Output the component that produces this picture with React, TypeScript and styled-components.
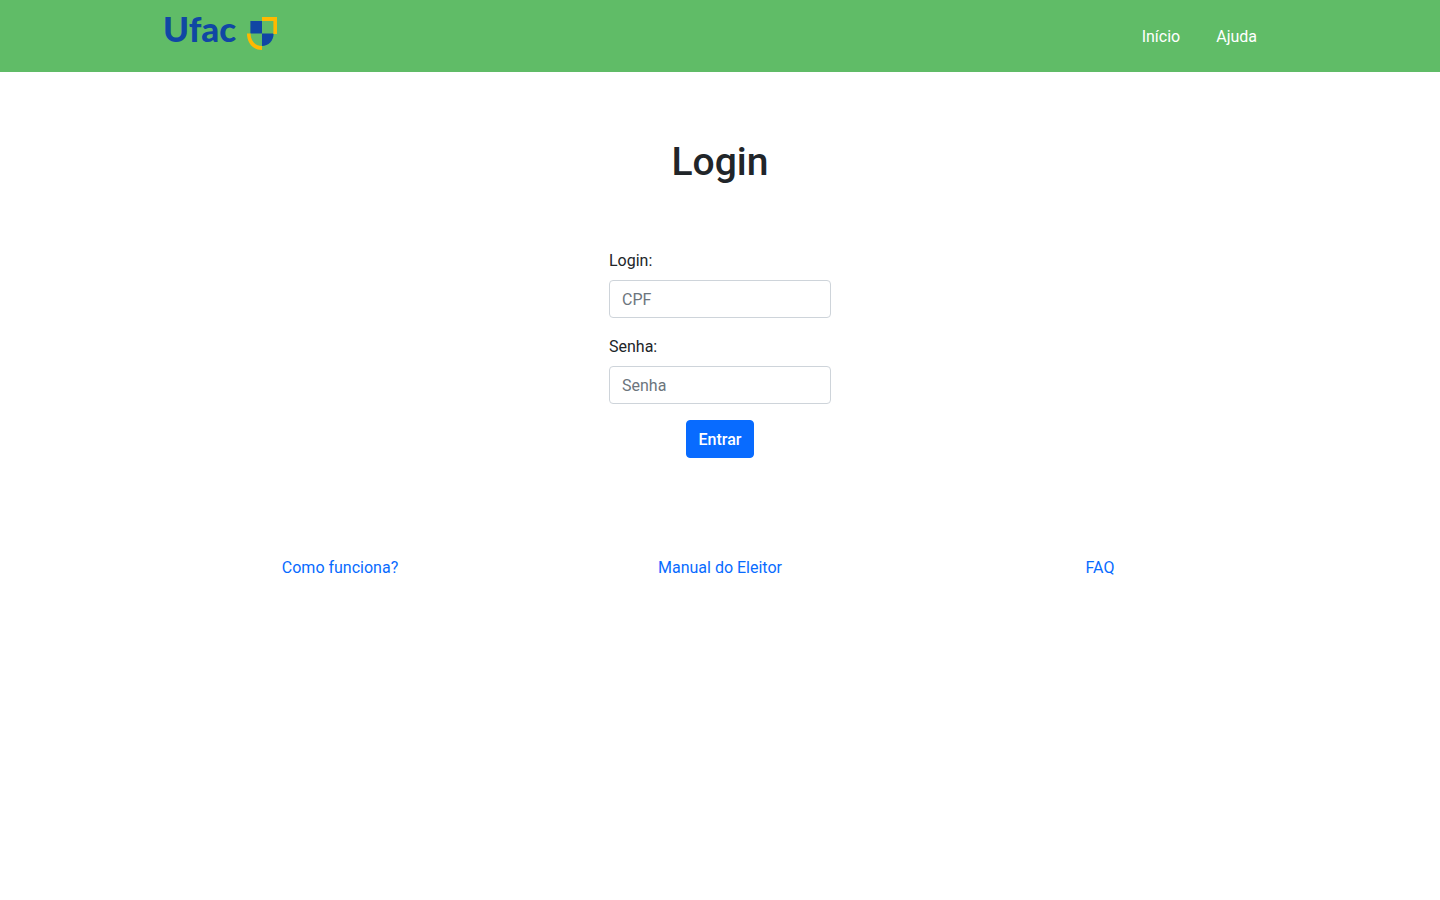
import React from "react";
import styled, { createGlobalStyle } from "styled-components";

const GlobalStyle = createGlobalStyle`
  *, *::before, *::after { box-sizing: border-box; }
  body {
    margin: 0;
    background: #fff;
    color: #212529;
    font-family: Roboto, "Liberation Sans", sans-serif;
    font-size: 16px;
    line-height: 24px;
  }
`;

const Container = styled.div`
  width: 100%;
  max-width: 1140px;
  margin: 0 auto;
`;

const Header = styled.header`
  background: #60bc67;
`;

const HeaderInner = styled(Container)`
  display: flex;
  align-items: flex-start;
  justify-content: space-between;
  min-height: 72px;
  padding: 8px 15px 8px 13px;
`;

const Brand = styled.a`
  display: flex;
  align-items: flex-start;
  gap: 10px;
  padding-top: 6px;
  color: #1047a4;
  text-decoration: none;
`;

const BrandName = styled.span`
  font-family: Lato, sans-serif;
  font-size: 35px;
  font-weight: 900;
  line-height: 28px;
`;

const Shield = styled.svg`
  display: block;
  width: 32px;
  height: 36px;
`;

const Nav = styled.nav`
  display: flex;
  padding-top: 17px;
`;

const NavLink = styled.a`
  padding: 0 18px;
  color: #fff;
  text-decoration: none;
`;

const Title = styled.h1`
  margin: 66px 0 62px;
  font-size: 39px;
  font-weight: 500;
  line-height: 48px;
  text-align: center;
`;

const Form = styled.form`
  display: flex;
  flex-direction: column;
  align-items: center;
  gap: 16px;
`;

const Field = styled.div`
  display: flex;
  flex-direction: column;
  gap: 6px;
`;

const Label = styled.label`
  line-height: 26px;
`;

const TextInput = styled.input`
  width: 222px;
  height: 38px;
  padding: 6px 12px;
  border: 1px solid #ced4da;
  border-radius: 4px;
  background: #fff;
  color: #495057;
  font: inherit;

  &::placeholder {
    color: #6c757d;
    opacity: 1;
  }
`;

const SubmitButton = styled.button`
  height: 38px;
  padding: 7px 12px 5px;
  border: 1px solid #086bff;
  border-radius: 4px;
  background: #086bff;
  color: #fff;
  font: inherit;
  font-weight: 500;
  cursor: pointer;
`;

const HelpLinks = styled(Container)`
  display: grid;
  grid-template-columns: repeat(3, 1fr);
  justify-items: center;
  padding: 98px 0 24px;
`;

const HelpLink = styled.a`
  color: #086bff;
  text-decoration: none;
`;

export default function App() {
  return (
    <>
      <GlobalStyle />
      <Header>
        <HeaderInner>
          <Brand href="#" aria-label="Ufac">
            <BrandName>Ufac</BrandName>
            <Shield viewBox="0 0 32 36" aria-hidden="true">
              <path fill="#1047a4" d="M4.4 7H16v12.5H4.4zM16 19.5h11.6C27.600 27 22.500 32 16 32z" />
              <path fill="#ffb900" d="M16 3h15v17h-3.600V7H16zM1 19.500h3.600C4.600 27 9.500 32 16 32v4C7.500 36 1 29.500 1 19.500z" />
            </Shield>
          </Brand>
          <Nav>
            <NavLink href="#">Início</NavLink>
            <NavLink href="#">Ajuda</NavLink>
          </Nav>
        </HeaderInner>
      </Header>
      <main>
        <Title>Login</Title>
        <Form onSubmit={(event: React.FormEvent) => event.preventDefault()}>
          <Field>
            <Label htmlFor="login">Login:</Label>
            <TextInput id="login" type="text" placeholder="CPF" />
          </Field>
          <Field>
            <Label htmlFor="senha">Senha:</Label>
            <TextInput id="senha" type="password" placeholder="Senha" />
          </Field>
          <SubmitButton type="submit">Entrar</SubmitButton>
        </Form>
        <HelpLinks>
          <HelpLink href="#">Como funciona?</HelpLink>
          <HelpLink href="#">Manual do Eleitor</HelpLink>
          <HelpLink href="#">FAQ</HelpLink>
        </HelpLinks>
      </main>
    </>
  );
}
